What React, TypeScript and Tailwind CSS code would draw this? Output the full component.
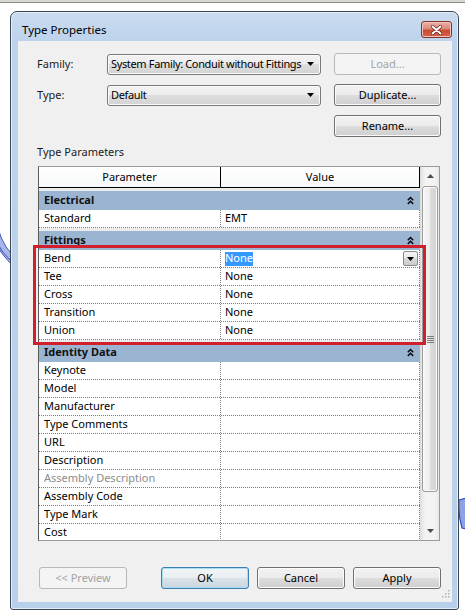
import React from "react";

const FONT = "font-['Noto_Sans',sans-serif]";

const BTN =
  "h-[22px] rounded-[3px] border border-[#707070] bg-[linear-gradient(to_bottom,#f2f2f2_0%,#ebebeb_50%,#dddddd_50%,#cfcfcf_100%)] shadow-[inset_0_0_0_1px_#fbfbfb] text-[11px] text-black flex items-center justify-center shrink-0";
const BTN_DIS =
  "h-[22px] rounded-[3px] border border-[#b5b9bc] bg-[#f4f4f4] text-[11px] text-[#a3a3a3] flex items-center justify-center shrink-0";
const BTN_OK =
  "h-[22px] rounded-[3px] border border-[#3c7fb1] bg-[linear-gradient(to_bottom,#f2f5f7_0%,#e9eef2_50%,#dae2e9_50%,#ccd6de_100%)] shadow-[inset_0_0_0_1px_#a6dcf4] text-[11px] text-black flex items-center justify-center shrink-0";

function DownTri({ className = "" }: { className?: string }) {
  return (
    <svg width="7" height="4" viewBox="0 0 7 4" className={className}>
      <path d="M0 0 H7 L3.5 4 Z" fill="#000" />
    </svg>
  );
}

function DoubleUp() {
  return (
    <svg width="7" height="9" viewBox="0 0 7 9">
      <path d="M0.8 4.2 L3.5 1.4 L6.2 4.2" fill="none" stroke="#000" strokeWidth="1.4" />
      <path d="M0.8 8 L3.5 5.2 L6.2 8" fill="none" stroke="#000" strokeWidth="1.4" />
    </svg>
  );
}

function Combo({ text }: { text: string }) {
  return (
    <div className="h-[21px] w-[214px] shrink-0 rounded-[3px] border border-[#7a7a7a] bg-[linear-gradient(to_bottom,#f3f3f3_0%,#ececec_50%,#dedede_50%,#d3d3d3_100%)] shadow-[inset_0_0_0_1px_#fafafa] flex items-center pl-[3px] pr-[6px] text-[11px] text-black">
      <span className="flex-1 min-w-0 overflow-hidden whitespace-nowrap tracking-[-0.35px]">{text}</span>
      <DownTri className="shrink-0 ml-[4px]" />
    </div>
  );
}

function Gap() {
  return <div className="h-[3px] shrink-0 bg-[#ebebeb]" />;
}

function Group({ name }: { name: string }) {
  return (
    <div className="h-[19px] shrink-0 bg-[#9bb4d2] flex items-center pl-[5px] pr-[6px] text-[11px] font-bold text-[#111]">
      <span className="flex-1">{name}</span>
      <DoubleUp />
    </div>
  );
}

function Row({
  name,
  value = "",
  gray = false,
  selected = false,
}: {
  name: string;
  value?: string;
  gray?: boolean;
  selected?: boolean;
}) {
  return (
    <div className="flex h-[18px] shrink-0 border-b border-dotted border-[#7c7c7c] text-[11px]">
      <div
        className={`w-[182px] shrink-0 border-r border-dotted border-[#7c7c7c] pl-[5px] flex items-center whitespace-nowrap ${
          gray ? "text-[#8c8c8c]" : "text-black"
        }`}
      >
        {name}
      </div>
      <div className="flex-1 border-r border-dotted border-[#7c7c7c] pl-[4px] pr-[1px] flex items-center">
        {selected ? (
          <>
            <span className="bg-[#3399ff] text-white h-[14px] flex items-center">{value}</span>
            <span className="flex-1" />
            <span className="w-[15px] h-[15px] rounded-[2px] border border-[#8a8a8a] bg-[linear-gradient(to_bottom,#f4f4f4_0%,#e8e8e8_50%,#d8d8d8_50%,#cdcdcd_100%)] flex items-center justify-center">
              <DownTri />
            </span>
          </>
        ) : (
          <span className="text-black">{value}</span>
        )}
      </div>
    </div>
  );
}

function Scrollbar() {
  return (
    <div className="w-[19px] shrink-0 flex flex-col border-l border-[#dcdcdc] bg-[linear-gradient(to_right,#e4e4e4,#f3f3f3_25%,#f3f3f3_75%,#e9e9e9)]">
      <div className="h-[18px] shrink-0 flex items-center justify-center">
        <svg width="7" height="4" viewBox="0 0 7 4">
          <path d="M0 4 H7 L3.5 0 Z" fill="#4d4d4d" />
        </svg>
      </div>
      <div className="mt-[1px] mx-[1px] h-[306px] shrink-0 rounded-[3px] border border-[#9b9b9b] bg-[linear-gradient(to_right,#f6f6f6,#ececec_50%,#dcdcdc_50%,#d2d2d2)] shadow-[inset_0_0_0_1px_#fafafa] flex items-center justify-center">
        <div className="flex flex-col gap-[1px]">
          <div className="w-[7px] h-[1px] bg-[#7c7c7c]" />
          <div className="w-[7px] h-[1px] bg-[#7c7c7c]" />
          <div className="w-[7px] h-[1px] bg-[#7c7c7c]" />
          <div className="w-[7px] h-[1px] bg-[#7c7c7c]" />
        </div>
      </div>
      <div className="flex-1" />
      <div className="h-[17px] shrink-0 flex items-start justify-center pt-[6px]">
        <svg width="7" height="4" viewBox="0 0 7 4">
          <path d="M0 0 H7 L3.5 4 Z" fill="#4d4d4d" />
        </svg>
      </div>
    </div>
  );
}

export default function App() {
  return (
    <div className={`relative w-[465px] h-[616px] overflow-hidden bg-white ${FONT}`}>
      {/* background drawing visible around the dialog */}
      <svg className="absolute left-0 top-0" width="465" height="616" viewBox="0 0 465 616">
        <path
          d="M -8 232 A 68 68 0 0 0 16 268 L 20 262 A 62 62 0 0 1 -2 228 Z"
          fill="#a9b6ea"
          stroke="#3a55b8"
          strokeWidth="1"
        />
        <path d="M -6 236 A 66 66 0 0 0 16 265" fill="none" stroke="#3a55b8" strokeWidth="1" />
        <path
          d="M 459 500 L 470 497 L 470 530 L 462 528 Q 458 515 459 500 Z"
          fill="#8fa2e6"
          stroke="#2f4bb4"
          strokeWidth="1.2"
        />
      </svg>

      <div className="relative flex flex-col">
        <div className="h-[3px] bg-[#d7d8cf] border-b border-[#8d8d86]" />

        {/* dialog window */}
        <div className="ml-[10px] mt-[8px] w-[449px] h-[599px] rounded-t-[7px] rounded-b-[3px] border border-[#3b4654] bg-[linear-gradient(to_bottom,#c9dbef_0px,#bdd3ec_30px,#b9d0ea_100%)] shadow-[inset_0_0_0_1px_#e4eef9] flex flex-col">
          {/* title bar */}
          <div className="h-[29px] shrink-0 flex items-start pl-[11px] pr-[6px]">
            <span className="mt-[10px] text-[11.5px] leading-[16px] text-black flex-1">Type Properties</span>
            <div className="mt-[9px] w-[31px] h-[17px] rounded-[3px] border border-[#83342a] bg-[linear-gradient(to_bottom,#ebb1a6_0%,#dc8a7b_45%,#c94a33_55%,#d2644a_100%)] shadow-[inset_0_0_0_1px_#f2c3b8] flex items-center justify-center">
              <svg width="11" height="10" viewBox="0 0 11 10">
                <path d="M1.5 1.5 L9.5 8.5 M9.5 1.5 L1.5 8.5" stroke="#5a1d14" strokeWidth="3.4" strokeLinecap="round" />
                <path d="M1.5 1.5 L9.5 8.5 M9.5 1.5 L1.5 8.5" stroke="#ffffff" strokeWidth="2" strokeLinecap="round" />
              </svg>
            </div>
          </div>

          {/* client area */}
          <div className="relative ml-[7px] w-[434px] h-[561px] shrink-0 bg-[#f0f0f0] flex flex-col text-[11px] text-black">
            <div className="pt-[12px] pl-[19px] flex flex-col gap-[9px]">
              <div className="flex items-center h-[22px]">
                <span className="w-[70px] shrink-0 text-[#1b1b1b]">Family:</span>
                <Combo text="System Family: Conduit without Fittings" />
                <div className={`${BTN_DIS} ml-[13px] w-[107px]`}>Load...</div>
              </div>
              <div className="flex items-center h-[22px]">
                <span className="w-[70px] shrink-0 text-[#1b1b1b]">Type:</span>
                <Combo text="Default" />
                <div className={`${BTN} ml-[13px] w-[107px]`}>Duplicate...</div>
              </div>
              <div className="flex items-center h-[22px]">
                <span className="w-[70px] shrink-0" />
                <span className="w-[214px] shrink-0" />
                <div className={`${BTN} ml-[13px] w-[107px]`}>Rename...</div>
              </div>
            </div>

            <div className="pl-[19px] mt-[7px] leading-[16px] text-[#1b1b1b]">Type Parameters</div>

            {/* parameters table */}
            <div className="relative ml-[20px] mt-[6px] w-[402px] h-[375px] shrink-0 border border-[#9a9a9a] border-l-[#5c5c5c] bg-white flex">
              <div className="w-[381px] shrink-0 flex flex-col overflow-hidden">
                <div className="h-[21px] shrink-0 flex border-b border-black bg-[linear-gradient(to_bottom,#ffffff,#f7f8f9)]">
                  <div className="w-[182px] shrink-0 border-r border-black flex items-center justify-center">
                    Parameter
                  </div>
                  <div className="flex-1 border-r border-black flex items-center justify-center">Value</div>
                </div>
                <Gap />
                <Group name="Electrical" />
                <Row name="Standard" value="EMT" />
                <Gap />
                <Group name="Fittings" />
                <Row name="Bend" value="None" selected />
                <Row name="Tee" value="None" />
                <Row name="Cross" value="None" />
                <Row name="Transition" value="None" />
                <Row name="Union" value="None" />
                <Gap />
                <Group name="Identity Data" />
                <Row name="Keynote" />
                <Row name="Model" />
                <Row name="Manufacturer" />
                <Row name="Type Comments" />
                <Row name="URL" />
                <Row name="Description" />
                <Row name="Assembly Description" gray />
                <Row name="Assembly Code" />
                <Row name="Type Mark" />
                <Row name="Cost" />
              </div>
              <Scrollbar />

              {/* red highlight annotation */}
              <div className="absolute left-[-6px] top-[78px] w-[393px] h-[100px] border-[3px] border-[#d1202c] pointer-events-none" />
            </div>

            <div className="ml-[21px] mt-[26px] flex">
              <div className={`${BTN_DIS} w-[88px]`}>&lt;&lt; Preview</div>
              <div className={`${BTN_OK} ml-[34px] w-[88px]`}>OK</div>
              <div className={`${BTN} ml-[8px] w-[88px]`}>Cancel</div>
              <div className={`${BTN} ml-[8px] w-[88px]`}>Apply</div>
            </div>

            {/* resize grip */}
            <svg className="absolute right-[2px] bottom-[4px]" width="8" height="8" viewBox="0 0 8 8">
              <rect x="6" y="0" width="1.5" height="1.5" fill="#b4b4b4" />
              <rect x="3" y="3" width="1.5" height="1.5" fill="#b4b4b4" />
              <rect x="6" y="3" width="1.5" height="1.5" fill="#b4b4b4" />
              <rect x="0" y="6" width="1.5" height="1.5" fill="#b4b4b4" />
              <rect x="3" y="6" width="1.5" height="1.5" fill="#b4b4b4" />
              <rect x="6" y="6" width="1.5" height="1.5" fill="#b4b4b4" />
            </svg>
          </div>
        </div>
      </div>
    </div>
  );
}
